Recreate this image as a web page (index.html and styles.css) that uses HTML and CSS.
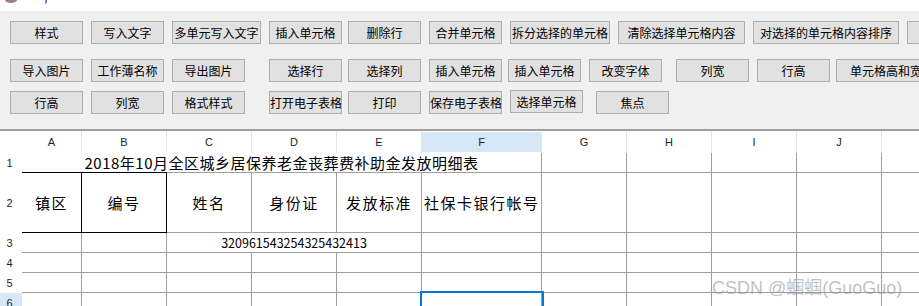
FILE: index.html
```html
<!DOCTYPE html>
<html lang="zh-CN">
<head>
    <meta charset="UTF-8">
    <title>Form1</title>
    <link rel="stylesheet" href="styles.css">
</head>
<body>

<div class="titlebar">
    <svg width="60" height="11" viewBox="0 0 60 11">
        <ellipse cx="11" cy="0" rx="6" ry="3" fill="#a08080"/>
        <rect x="45" y="0" width="1" height="4" fill="#e08a1e"/>
        <rect x="46" y="0" width="1" height="3" fill="#3b7bd0"/>
    </svg>
</div>

<div class="toolbar">
    <div class="bar-row">
        <button class="btn">样式</button>
        <button class="btn">写入文字</button>
        <button class="btn w89">多单元写入文字</button>
        <button class="btn">插入单元格</button>
        <button class="btn tight">删除行</button>
        <button class="btn">合并单元格</button>
        <button class="btn w100">拆分选择的单元格</button>
        <button class="btn w127">清除选择单元格内容</button>
        <button class="btn w146">对选择的单元格内容排序</button>
        <button class="btn"></button>
    </div>
    <div class="bar-row row2">
        <button class="btn">导入图片</button>
        <button class="btn">工作薄名称</button>
        <button class="btn">导出图片</button>
        <button class="btn push">选择行</button>
        <button class="btn tight">选择列</button>
        <button class="btn">插入单元格</button>
        <button class="btn tight">插入单元格</button>
        <button class="btn">改变字体</button>
        <button class="btn push6">列宽</button>
        <button class="btn">行高</button>
        <button class="btn tight w100">单元格高和宽</button>
    </div>
    <div class="bar-row row3">
        <button class="btn">行高</button>
        <button class="btn">列宽</button>
        <button class="btn">格式样式</button>
        <button class="btn push">打开电子表格</button>
        <button class="btn tight">打印</button>
        <button class="btn">保存电子表格</button>
        <button class="btn up">选择单元格</button>
        <button class="btn push5">焦点</button>
    </div>
</div>

<div class="sheet-wrap">
    <div class="sheet">
        <!-- column headers -->
        <div class="hd corner"></div>
        <div class="hd">A</div>
        <div class="hd">B</div>
        <div class="hd">C</div>
        <div class="hd">D</div>
        <div class="hd">E</div>
        <div class="hd active">F</div>
        <div class="hd">G</div>
        <div class="hd">H</div>
        <div class="hd">I</div>
        <div class="hd">J</div>
        <div class="hd"></div>

        <!-- row 1 -->
        <div class="rh">1</div>
        <div class="c title span6">2018年10月全区城乡居保养老金丧葬费补助金发放明细表</div>
        <div class="c"></div><div class="c"></div><div class="c"></div><div class="c"></div><div class="c"></div>

        <!-- row 2 -->
        <div class="rh">2</div>
        <div class="c head boxed">镇区</div>
        <div class="c head boxed">编号</div>
        <div class="c head">姓名</div>
        <div class="c head">身份证</div>
        <div class="c head">发放标准</div>
        <div class="c head left">社保卡银行帐号</div>
        <div class="c"></div><div class="c"></div><div class="c"></div><div class="c"></div><div class="c"></div>

        <!-- row 3 -->
        <div class="rh">3</div>
        <div class="c"></div>
        <div class="c"></div>
        <div class="c num span3">320961543254325432413</div>
        <div class="c"></div>
        <div class="c"></div><div class="c"></div><div class="c"></div><div class="c"></div><div class="c"></div>

        <!-- row 4 -->
        <div class="rh">4</div>
        <div class="c"></div><div class="c"></div><div class="c"></div><div class="c"></div><div class="c"></div>
        <div class="c"></div><div class="c"></div><div class="c"></div><div class="c"></div><div class="c"></div><div class="c"></div>

        <!-- row 5 -->
        <div class="rh">5</div>
        <div class="c"></div><div class="c"></div><div class="c"></div><div class="c"></div><div class="c"></div>
        <div class="c"></div><div class="c"></div><div class="c"></div><div class="c"></div><div class="c"></div><div class="c"></div>

        <!-- row 6 -->
        <div class="rh active">6</div>
        <div class="c"></div><div class="c"></div><div class="c"></div><div class="c"></div><div class="c"></div>
        <div class="c selected"></div>
        <div class="c"></div><div class="c"></div><div class="c"></div><div class="c"></div><div class="c"></div>
    </div>

    <div class="watermark">CSDN @蝈蝈(GuoGuo)</div>
</div>

</body>
</html>
```

FILE: styles.css
```css
body {
    margin: 0;
    width: 919px;
    height: 306px;
    overflow: hidden;
    background-color: #fff;
    font-family: "Noto Sans CJK SC", "Liberation Sans", sans-serif;
    color: #000;
}
.titlebar {
    height: 11px;
    background-color: #fff;
    overflow: hidden;
}
.titlebar svg {
    display: block;
}

/* button area */
.toolbar {
    height: 93px;
    padding: 10px 0 15px 10px;
    background-color: #f0f0f0;
    border-bottom: 2px solid #a0a0a0;
    overflow: hidden;
}
.bar-row {
    display: flex;
    gap: 8px;
}
.row2 {
    margin-top: 15px;
}
.row3 {
    margin-top: 9px;
}
.btn {
    flex-shrink: 0;
    width: 73px;
    height: 23px;
    padding: 0;
    margin: 0;
    background-color: #e1e1e1;
    border: 1px solid #adadad;
    border-radius: 0;
    font-family: "Noto Sans CJK SC", sans-serif;
    font-size: 12px;
    line-height: 21px;
    color: #000;
    white-space: nowrap;
    overflow: hidden;
    text-align: center;
}
.w89 { width: 89px; }
.w100 { width: 100px; }
.w127 { width: 127px; }
.w146 { width: 146px; }
.tight { margin-left: -2px; }
.push { margin-left: 16px; }
.push6 { margin-left: 6px; }
.push5 { margin-left: 5px; }
.up { margin-top: -1px; }

/* spreadsheet */
.sheet-wrap {
    position: relative;
    height: 175px;
    overflow: hidden;
}
.sheet {
    display: grid;
    grid-template-columns: 22px 60px 85px 85px 85px 85px 120px 85px 85px 85px 85px 85px;
    grid-template-rows: 22px 20px 60px 20px 20px 20px 20px;
}
.hd {
    box-sizing: border-box;
    border-right: 1px solid #e6e6e6;
    font-family: "Liberation Sans", sans-serif;
    font-size: 11px;
    line-height: 22px;
    text-align: center;
    color: #1e1e1e;
}
.hd.corner {
    border-right: none;
}
.hd.active {
    background-color: #d6e7f7;
    border-top: 1px solid #fff;
    border-bottom: 1px solid #fff;
    line-height: 20px;
}
.rh {
    font-family: "Liberation Sans", sans-serif;
    font-size: 11px;
    color: #1e1e1e;
    text-align: center;
    padding-right: 3px;
    display: flex;
    align-items: center;
    justify-content: center;
}
.rh.active {
    background-color: #d6e7f7;
}
.c {
    box-sizing: border-box;
    border-right: 1px solid #9e9e9e;
    border-bottom: 1px solid #9e9e9e;
    display: flex;
    align-items: center;
    justify-content: center;
    white-space: nowrap;
}
.span6 {
    grid-column: span 6;
}
.span3 {
    grid-column: span 3;
}
.title {
    font-size: 15px;
    letter-spacing: 0.5px;
}
.head {
    font-size: 15px;
    letter-spacing: 1.5px;
}
.head.left {
    justify-content: flex-start;
    padding-left: 2px;
}
.boxed {
    border-right-color: #000;
    border-bottom-color: #000;
    box-shadow: 0 -1px 0 #000;
}
.num {
    font-size: 12.5px;
    padding-bottom: 1px;
}
.selected {
    outline: 2px solid #0078d7;
}
.watermark {
    position: absolute;
    left: 712px;
    top: 142px;
    font-family: "Liberation Sans", "Noto Sans CJK SC", sans-serif;
    font-size: 18px;
    color: rgba(150, 150, 150, 0.6);
    white-space: nowrap;
}
```
